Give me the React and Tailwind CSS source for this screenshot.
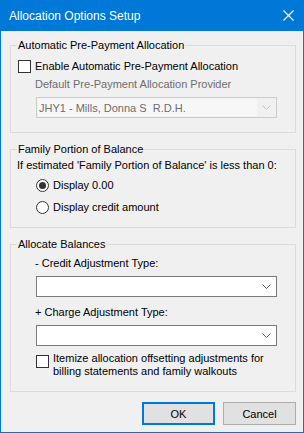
import React, { useState } from "react";

const font = { fontFamily: '"Liberation Sans", Arial, sans-serif' };

function Chevron({ color = "#606060" }) {
  return (
    <svg width="9" height="5" viewBox="0 0 9 5" className="shrink-0">
      <path d="M0.5 0.5 L4.5 4.5 L8.5 0.5" fill="none" stroke={color} strokeWidth="1" />
    </svg>
  );
}

function Combo({ value = "", disabled = false, className = "" }) {
  if (disabled) {
    return (
      <div className={`h-[21px] w-[241px] border border-[#cccccc] bg-[#f0f0f0] flex items-center p-px ${className}`}>
        <div className="h-full flex-1 bg-[#f7f7f7] flex items-center pl-[1px] text-[#6d6d6d] whitespace-pre">{value}</div>
        <div className="w-[18px] h-full flex items-center justify-center">
          <Chevron color="#bfbfbf" />
        </div>
      </div>
    );
  }
  return (
    <div className={`h-[21px] w-[241px] border border-[#7a7a7a] bg-white flex items-center ${className}`}>
      <div className="flex-1 pl-[3px]">{value}</div>
      <div className="w-[18px] h-full flex items-center justify-center pr-[2px]">
        <Chevron />
      </div>
    </div>
  );
}

function CheckBox({ checked, onChange, className = "" }) {
  return (
    <button
      onClick={onChange}
      className={`w-[13px] h-[13px] border border-[#333333] bg-white shrink-0 flex items-center justify-center ${className}`}
    >
      {checked && (
        <svg width="9" height="9" viewBox="0 0 9 9">
          <path d="M1 4.5 L3.5 7 L8 1.5" fill="none" stroke="#333" strokeWidth="1.5" />
        </svg>
      )}
    </button>
  );
}

function Radio({ checked, onClick, label, className = "" }) {
  return (
    <div className={`flex items-center h-[16px] ${className}`} onClick={onClick}>
      <div className="w-[13px] h-[13px] rounded-full border border-[#333333] bg-white flex items-center justify-center ml-[19px]">
        {checked && <div className="w-[7px] h-[7px] rounded-full bg-[#333333]" />}
      </div>
      <span className="ml-[4px]">{label}</span>
    </div>
  );
}

export default function App() {
  const [enableAuto, setEnableAuto] = useState(false);
  const [itemize, setItemize] = useState(false);
  const [display, setDisplay] = useState("zero");

  return (
    <div
      style={font}
      className="w-[304px] h-[433px] border border-t-0 border-[#0078d7] bg-[#f0f0f0] text-[11px] leading-[16px] text-black flex flex-col overflow-hidden"
    >
      {/* Title bar */}
      <div className="h-[31px] shrink-0 -mx-px bg-[#0078d7] text-white flex items-center justify-between pl-[9px] pr-[10px]">
        <span className="text-[12px]">Allocation Options Setup</span>
        <svg width="11" height="11" viewBox="0 0 11 11">
          <path d="M0.5 0.5 L10.5 10.5 M10.5 0.5 L0.5 10.5" stroke="white" strokeWidth="1.2" />
        </svg>
      </div>

      <div className="shrink-0 pl-[9px] pr-[7px] flex flex-col">
        {/* Automatic Pre-Payment Allocation */}
        <fieldset className="mt-[6px] border border-[#dcdcdc] px-[6px] pb-[14px]">
          <legend className="px-[1px]">Automatic Pre-Payment Allocation</legend>
          <div className="flex items-center h-[16px] mt-[5px]">
            <CheckBox checked={enableAuto} onChange={() => setEnableAuto(!enableAuto)} className="ml-px" />
            <span className="ml-[4px]">Enable Automatic Pre-Payment Allocation</span>
          </div>
          <div className="mt-[2px] pl-[18px] text-[#6d6d6d]">Default Pre-Payment Allocation Provider</div>
          <Combo disabled value="JHY1 - Mills, Donna S  R.D.H." className="mt-[5px] ml-[19px]" />
        </fieldset>

        {/* Family Portion of Balance */}
        <fieldset className="mt-[8px] border border-[#dcdcdc] px-[6px] pb-[12px]">
          <legend className="px-[1px]">Family Portion of Balance</legend>
          <div className="whitespace-nowrap">If estimated 'Family Portion of Balance' is less than 0:</div>
          <Radio
            className="mt-[4px]"
            checked={display === "zero"}
            onClick={() => setDisplay("zero")}
            label="Display 0.00"
          />
          <Radio
            className="mt-[6px]"
            checked={display === "credit"}
            onClick={() => setDisplay("credit")}
            label="Display credit amount"
          />
        </fieldset>

        {/* Allocate Balances */}
        <fieldset className="mt-[8px] border border-[#dcdcdc] px-[6px] pb-[13px]">
          <legend className="px-[1px]">Allocate Balances</legend>
          <div className="mt-[3px] pl-[18px]">- Credit Adjustment Type:</div>
          <Combo className="mt-[5px] ml-[19px]" />
          <div className="mt-[7px] pl-[18px]">+ Charge Adjustment Type:</div>
          <Combo className="mt-[5px] ml-[19px]" />
          <div className="mt-[6px] ml-[19px] flex items-start">
            <CheckBox checked={itemize} onChange={() => setItemize(!itemize)} className="mt-[3px]" />
            <span className="ml-[4px] leading-[13px]">
              Itemize allocation offsetting adjustments for
              <br />
              billing statements and family walkouts
            </span>
          </div>
        </fieldset>

        {/* Buttons */}
        <div className="mt-[10px] flex justify-end gap-[8px]">
          <button className="w-[73px] h-[23px] border-2 border-[#0078d7] bg-[#e1e1e1]">OK</button>
          <button className="w-[73px] h-[23px] border border-[#adadad] bg-[#e1e1e1]">Cancel</button>
        </div>
      </div>
    </div>
  );
}
